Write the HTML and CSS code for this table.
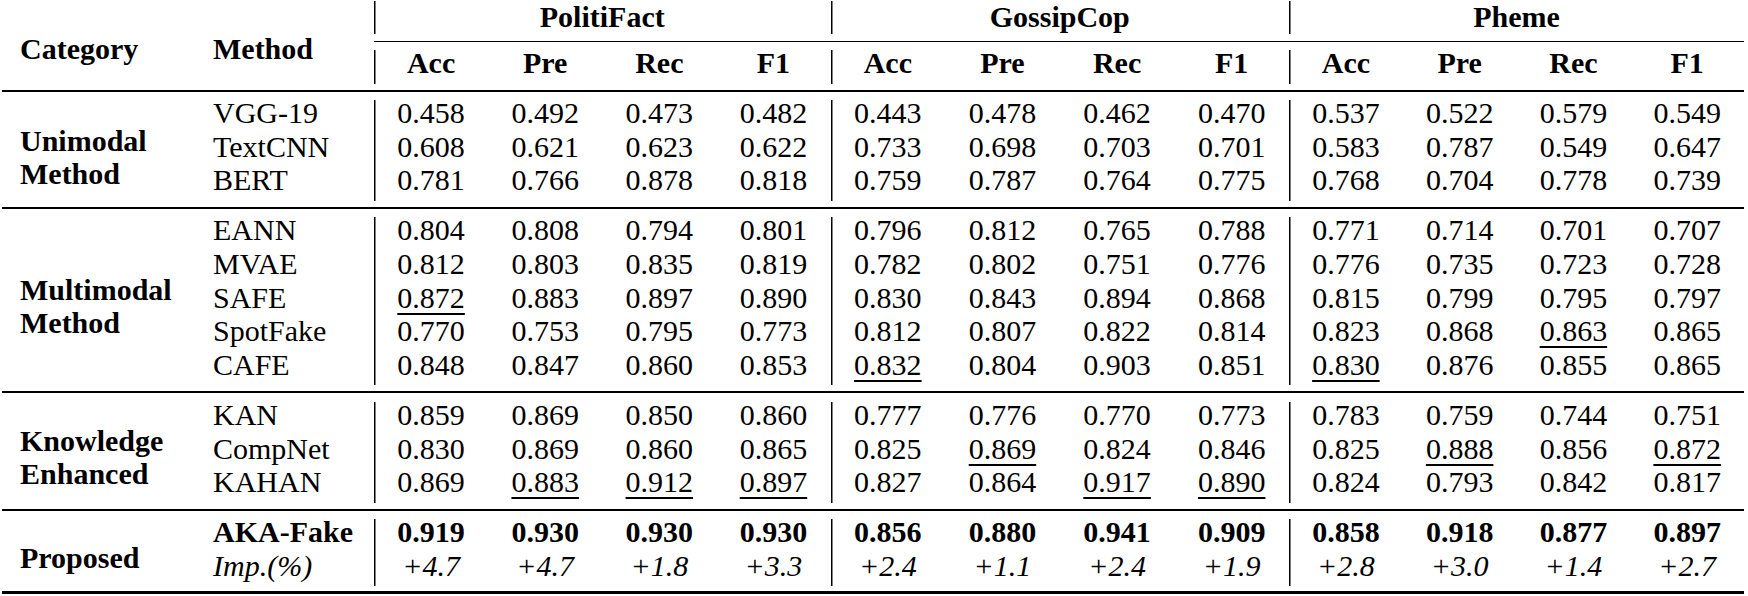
FILE: index.html
```html
<!DOCTYPE html>
<html lang="en">
<head>
<meta charset="utf-8">
<title>Results</title>
<link rel="stylesheet" href="styles.css">
</head>
<body>
<table class="results">
  <colgroup>
    <col class="c-cat"><col class="c-method">
    <col class="c-g1"><col class="c-g1"><col class="c-g1"><col class="c-g1">
    <col class="c-g2"><col class="c-g2"><col class="c-g2"><col class="c-g2">
    <col class="c-g3"><col class="c-g3"><col class="c-g3"><col class="c-g3">
  </colgroup>
  <thead>
    <tr class="row first-row">
      <th class="cat head-cat" rowspan="3">Category</th>
      <th class="method head-cat" rowspan="3">Method</th>
      <th class="gs" colspan="4">PolitiFact</th>
      <th class="gs" colspan="4">GossipCop</th>
      <th class="gs" colspan="4">Pheme</th>
    </tr>
    <tr class="gap"><td colspan="12"><div class="line cmid"></div></td></tr>
    <tr class="row">
      <th class="gs">Acc</th><th>Pre</th><th>Rec</th><th>F1</th>
      <th class="gs">Acc</th><th>Pre</th><th>Rec</th><th>F1</th>
      <th class="gs">Acc</th><th>Pre</th><th>Rec</th><th>F1</th>
    </tr>
    <tr class="gap"><td colspan="14"><div class="line mid"></div></td></tr>
  </thead>
  <tbody>
    <tr class="row">
      <th class="cat cat-first" rowspan="3">Unimodal<br>Method</th>
      <td class="method">VGG-19</td>
      <td class="gs">0.458</td><td>0.492</td><td>0.473</td><td>0.482</td>
      <td class="gs">0.443</td><td>0.478</td><td>0.462</td><td>0.470</td>
      <td class="gs">0.537</td><td>0.522</td><td>0.579</td><td>0.549</td>
    </tr>
    <tr class="row">
      <td class="method">TextCNN</td>
      <td class="gs">0.608</td><td>0.621</td><td>0.623</td><td>0.622</td>
      <td class="gs">0.733</td><td>0.698</td><td>0.703</td><td>0.701</td>
      <td class="gs">0.583</td><td>0.787</td><td>0.549</td><td>0.647</td>
    </tr>
    <tr class="row">
      <td class="method">BERT</td>
      <td class="gs">0.781</td><td>0.766</td><td>0.878</td><td>0.818</td>
      <td class="gs">0.759</td><td>0.787</td><td>0.764</td><td>0.775</td>
      <td class="gs">0.768</td><td>0.704</td><td>0.778</td><td>0.739</td>
    </tr>
    <tr class="gap"><td colspan="14"><div class="line mid"></div></td></tr>

    <tr class="row">
      <th class="cat" rowspan="5">Multimodal<br>Method</th>
      <td class="method">EANN</td>
      <td class="gs">0.804</td><td>0.808</td><td>0.794</td><td>0.801</td>
      <td class="gs">0.796</td><td>0.812</td><td>0.765</td><td>0.788</td>
      <td class="gs">0.771</td><td>0.714</td><td>0.701</td><td>0.707</td>
    </tr>
    <tr class="row">
      <td class="method">MVAE</td>
      <td class="gs">0.812</td><td>0.803</td><td>0.835</td><td>0.819</td>
      <td class="gs">0.782</td><td>0.802</td><td>0.751</td><td>0.776</td>
      <td class="gs">0.776</td><td>0.735</td><td>0.723</td><td>0.728</td>
    </tr>
    <tr class="row">
      <td class="method">SAFE</td>
      <td class="gs"><span class="u">0.872</span></td><td>0.883</td><td>0.897</td><td>0.890</td>
      <td class="gs">0.830</td><td>0.843</td><td>0.894</td><td>0.868</td>
      <td class="gs">0.815</td><td>0.799</td><td>0.795</td><td>0.797</td>
    </tr>
    <tr class="row">
      <td class="method">SpotFake</td>
      <td class="gs">0.770</td><td>0.753</td><td>0.795</td><td>0.773</td>
      <td class="gs">0.812</td><td>0.807</td><td>0.822</td><td>0.814</td>
      <td class="gs">0.823</td><td>0.868</td><td><span class="u">0.863</span></td><td>0.865</td>
    </tr>
    <tr class="row">
      <td class="method">CAFE</td>
      <td class="gs">0.848</td><td>0.847</td><td>0.860</td><td>0.853</td>
      <td class="gs"><span class="u">0.832</span></td><td>0.804</td><td>0.903</td><td>0.851</td>
      <td class="gs"><span class="u">0.830</span></td><td>0.876</td><td>0.855</td><td>0.865</td>
    </tr>
    <tr class="gap"><td colspan="14"><div class="line mid"></div></td></tr>

    <tr class="row">
      <th class="cat" rowspan="3">Knowledge<br>Enhanced</th>
      <td class="method">KAN</td>
      <td class="gs">0.859</td><td>0.869</td><td>0.850</td><td>0.860</td>
      <td class="gs">0.777</td><td>0.776</td><td>0.770</td><td>0.773</td>
      <td class="gs">0.783</td><td>0.759</td><td>0.744</td><td>0.751</td>
    </tr>
    <tr class="row">
      <td class="method">CompNet</td>
      <td class="gs">0.830</td><td>0.869</td><td>0.860</td><td>0.865</td>
      <td class="gs">0.825</td><td><span class="u">0.869</span></td><td>0.824</td><td>0.846</td>
      <td class="gs">0.825</td><td><span class="u">0.888</span></td><td>0.856</td><td><span class="u">0.872</span></td>
    </tr>
    <tr class="row">
      <td class="method">KAHAN</td>
      <td class="gs">0.869</td><td><span class="u">0.883</span></td><td><span class="u">0.912</span></td><td><span class="u">0.897</span></td>
      <td class="gs">0.827</td><td>0.864</td><td><span class="u">0.917</span></td><td><span class="u">0.890</span></td>
      <td class="gs">0.824</td><td>0.793</td><td>0.842</td><td>0.817</td>
    </tr>
    <tr class="gap"><td colspan="14"><div class="line mid"></div></td></tr>

    <tr class="row best">
      <th class="cat" rowspan="2">Proposed</th>
      <td class="method">AKA-Fake</td>
      <td class="gs">0.919</td><td>0.930</td><td>0.930</td><td>0.930</td>
      <td class="gs">0.856</td><td>0.880</td><td>0.941</td><td>0.909</td>
      <td class="gs">0.858</td><td>0.918</td><td>0.877</td><td>0.897</td>
    </tr>
    <tr class="row imp">
      <td class="method">Imp.(%)</td>
      <td class="gs">+4.7</td><td>+4.7</td><td>+1.8</td><td>+3.3</td>
      <td class="gs">+2.4</td><td>+1.1</td><td>+2.4</td><td>+1.9</td>
      <td class="gs">+2.8</td><td>+3.0</td><td>+1.4</td><td>+2.7</td>
    </tr>
    <tr class="gap"><td colspan="14"><div class="line bottom"></div></td></tr>
  </tbody>
</table>
</body>
</html>
```

FILE: styles.css
```css
html, body {
  margin: 0;
  padding: 0;
  background: #ffffff;
}

body {
  font-family: "Liberation Serif", "Times New Roman", Tinos, serif;
  font-size: 30px;
  color: #000000;
}

.results {
  table-layout: fixed;
  width: 1742px;
  margin: 1px 0 0 2px;
  border-collapse: separate;
  border-spacing: 0;
  font-family: "Liberation Serif", "Times New Roman", Tinos, serif;
  font-size: 30px;
}

.c-cat { width: 211px; }
.c-method { width: 161px; }
.c-g1 { width: 114.125px; }
.c-g2 { width: 114.625px; }
.c-g3 { width: 113.75px; }

.results th,
.results td {
  padding: 0;
  text-align: center;
  white-space: nowrap;
}

.row > th,
.row > td {
  height: 33.6px;
  line-height: 26.75px;
  vertical-align: top;
}

.first-row > th {
  height: 32.6px;
  line-height: 31.4px;
}

.results th {
  font-weight: bold;
}

.results .cat {
  text-align: left;
  padding-left: 18px;
  vertical-align: middle;
  line-height: 33px;
  padding-top: 9px;
}

.results .cat-first {
  padding-top: 13px;
}

.results .head-cat {
  padding-top: 14px;
  line-height: 34px;
  height: auto;
}

.results .method {
  text-align: left;
}

.results th.method {
  vertical-align: middle;
}

.gs {
  background-image: linear-gradient(#000000, #000000);
  background-repeat: no-repeat;
  background-size: 1.5px 100%;
  background-position: left top;
}

.gap > td {
  padding: 0;
  height: auto;
}

.line {
  background: #000000;
}

.line.cmid {
  height: 1px;
  margin: 7.5px 0 8px 0;
}

.line.mid {
  height: 2px;
  margin: 6px 0 8.5px 0;
}

.line.bottom {
  height: 3px;
  margin: 5px 0 0 0;
}

.u {
  text-decoration: underline;
  text-decoration-thickness: 1.5px;
  text-underline-offset: 5px;
}

.best td {
  font-weight: bold;
}

.imp td {
  font-style: italic;
}
```
